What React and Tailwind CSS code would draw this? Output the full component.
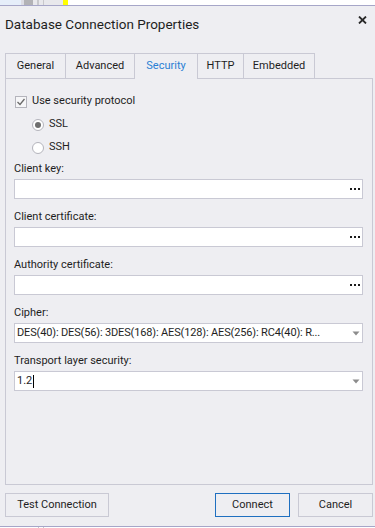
const font = { fontFamily: 'Roboto, "Noto Sans", sans-serif' }

function Dots() {
    return (
        <div className="flex gap-[2px] pr-[2px]">
            <span className="w-[2px] h-[2px] bg-[#1a1a1a]" />
            <span className="w-[2px] h-[2px] bg-[#1a1a1a]" />
            <span className="w-[2px] h-[2px] bg-[#1a1a1a]" />
        </div>
    )
}

function Arrow() {
    return (
        <svg width="8" height="5" viewBox="0 0 8 5" className="mr-[2px] shrink-0">
            <path d="M0.5 0.5 L7.5 0.5 L4 4.5 Z" fill="#8c8c8c" />
        </svg>
    )
}

function Field({ label, children }) {
    return (
        <div className="flex flex-col gap-[2px]">
            <div className="h-[16px] leading-[16px] text-[11px] text-[#1e1e1e]">{label}</div>
            <div className="h-[20px] border border-[#c9c9d4] bg-white flex items-center justify-between pl-[2px] text-[11px] text-[#1e1e1e]">
                {children}
            </div>
        </div>
    )
}

function Radio({ checked, label }) {
    return (
        <div className="h-[23px] flex items-center pl-[18px] gap-[5px]">
            <span className="w-[12px] h-[12px] rounded-full border border-[#b4b4bc] bg-white flex items-center justify-center">
                {checked && <span className="w-[6px] h-[6px] rounded-full bg-[#6e6e6e]" />}
            </span>
            <span className="text-[11px] text-[#1e1e1e]">{label}</span>
        </div>
    )
}

export default function App() {
    const tabs = [
        { name: 'General', w: 'w-[60px]' },
        { name: 'Advanced', w: 'w-[69px]' },
        { name: 'Security', w: 'w-[63px]', active: true },
        { name: 'HTTP', w: 'w-[46px]' },
        { name: 'Embedded', w: 'w-[72px] border-r' },
    ]

    return (
        <div className="w-[375px] h-[528px] bg-white flex flex-col overflow-hidden" style={font}>
            {/* strip of the window behind */}
            <div className="h-[5px] flex shrink-0">
                <div className="w-[21px] bg-[#e6eefa]" />
                <div className="w-[3px] bg-[#dcdce4]" />
                <div className="w-[9px] bg-[#b2b2b6]" />
                <div className="w-[4px] bg-[#e8e8ec]" />
                <div className="w-[2px] bg-[#c8c8cc]" />
                <div className="w-[4px] bg-[#e8e8ec]" />
                <div className="w-[1px] bg-[#c8c8cc]" />
                <div className="w-[19px] bg-[#e8e8ec]" />
                <div className="w-[5px] bg-[#ffff00]" />
                <div className="flex-1 bg-white" />
            </div>

            <div className="h-[522px] shrink-0 bg-[#eeeef2] border-y border-[#a6a6c8] flex flex-col pl-[5px] pr-[2px]">
                {/* header */}
                <div className="h-[47px] flex justify-between pt-[8px]">
                    <div className="text-[13.5px] leading-[20px] text-[#1e1e1e]">Database Connection Properties</div>
                    <svg width="9" height="8" viewBox="0 0 9 8" className="mt-[2px] mr-[6px]">
                        <path d="M1 0.5 L8 7.5 M8 0.5 L1 7.5" stroke="#2a2a2a" strokeWidth="1.8" />
                    </svg>
                </div>

                {/* tabs */}
                <div className="h-[26px] -mb-[1px] flex relative z-10">
                    {tabs.map((t) => (
                        <div
                            key={t.name}
                            className={`${t.w} h-full border-l border-t border-[#c9c9d4] flex items-center justify-center text-[11px] pb-[1px] ${
                                t.active ? 'bg-[#eeeef2] text-[#2a7fd4]' : 'text-[#1e1e1e]'
                            }`}
                        >
                            {t.name}
                        </div>
                    ))}
                </div>

                {/* panel */}
                <div className="h-[407px] border border-[#c9c9d4] pt-[11px] pl-[8px] pr-[9px] flex flex-col">
                    <div className="h-[23px] flex items-center pl-[1px] gap-[5px]">
                        <span className="w-[12px] h-[12px] border border-[#b4b4bc] bg-[#f6f6f8] flex items-center justify-center">
                            <svg width="10" height="10" viewBox="0 0 10 10">
                                <path d="M1.5 5 L4 7.5 L8.5 2" fill="none" stroke="#6a6a6a" strokeWidth="1.3" />
                            </svg>
                        </span>
                        <span className="text-[11px] text-[#1e1e1e]">Use security protocol</span>
                    </div>
                    <Radio checked label="SSL" />
                    <Radio label="SSH" />

                    <div className="flex flex-col gap-[10px] mt-[2px]">
                        <Field label="Client key:">
                            <span />
                            <Dots />
                        </Field>
                        <Field label="Client certificate:">
                            <span />
                            <Dots />
                        </Field>
                        <Field label="Authority certificate:">
                            <span />
                            <Dots />
                        </Field>
                        <Field label="Cipher:">
                            <span className="whitespace-nowrap tracking-[-0.15px]">
                                DES(40): DES(56): 3DES(168): AES(128): AES(256): RC4(40): R...
                            </span>
                            <Arrow />
                        </Field>
                        <Field label="Transport layer security:">
                            <span className="flex items-center">
                                1.2
                                <span className="w-[1px] h-[13px] bg-black ml-[1px]" />
                            </span>
                            <Arrow />
                        </Field>
                    </div>
                </div>

                {/* buttons */}
                <div className="flex mt-[8px] h-[24px] text-[11px] text-[#1e1e1e]">
                    <div className="w-[104px] border border-[#c9c9d4] flex items-center justify-center">Test Connection</div>
                    <div className="flex-1" />
                    <div className="w-[75px] border border-[#1f6fc0] flex items-center justify-center">Connect</div>
                    <div className="w-[75px] ml-[8px] border border-[#c9c9d4] flex items-center justify-center">Cancel</div>
                </div>
            </div>

            <div className="h-[1px] flex shrink-0">
                <div className="w-[38px] bg-white" />
                <div className="w-[1px] bg-[#c8c8cc]" />
                <div className="w-[4px] bg-white" />
                <div className="w-[1px] bg-[#c8c8cc]" />
                <div className="flex-1 bg-white" />
            </div>
        </div>
    )
}
